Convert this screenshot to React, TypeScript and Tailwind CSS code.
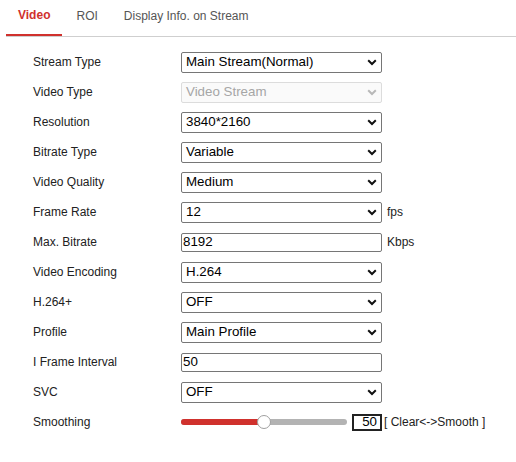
import React from 'react'

type Row = {
  label: string
  kind: 'select' | 'input' | 'slider'
  value?: string
  disabled?: boolean
  unit?: string
}

const rows: Row[] = [
  { label: 'Stream Type', kind: 'select', value: 'Main Stream(Normal)' },
  { label: 'Video Type', kind: 'select', value: 'Video Stream', disabled: true },
  { label: 'Resolution', kind: 'select', value: '3840*2160' },
  { label: 'Bitrate Type', kind: 'select', value: 'Variable' },
  { label: 'Video Quality', kind: 'select', value: 'Medium' },
  { label: 'Frame Rate', kind: 'select', value: '12', unit: 'fps' },
  { label: 'Max. Bitrate', kind: 'input', value: '8192', unit: 'Kbps' },
  { label: 'Video Encoding', kind: 'select', value: 'H.264' },
  { label: 'H.264+', kind: 'select', value: 'OFF' },
  { label: 'Profile', kind: 'select', value: 'Main Profile' },
  { label: 'I Frame Interval', kind: 'input', value: '50' },
  { label: 'SVC', kind: 'select', value: 'OFF' },
  { label: 'Smoothing', kind: 'slider', value: '50' }
]

function Chevron({ disabled }: { disabled?: boolean }) {
  return (
    <svg width="10" height="7" viewBox="0 0 10 7" className="shrink-0">
      <path
        d="M1.2 1.3 L5 5 L8.8 1.3"
        fill="none"
        stroke={disabled ? '#b8b8b8' : '#111'}
        strokeWidth="2"
      />
    </svg>
  )
}

function FakeSelect({ value, disabled }: { value: string; disabled?: boolean }) {
  return (
    <div
      className={
        disabled
          ? 'flex h-[21px] w-[201px] items-center justify-between rounded-[2px] border border-[#dcdcdc] bg-[#fafafa] pl-[4px] pr-[4px] text-[13.33px] text-[#a6a6a6]'
          : 'flex h-[21px] w-[201px] items-center justify-between rounded-[2px] border border-[#767676] bg-white pl-[4px] pr-[4px] text-[13.33px] text-black'
      }
    >
      <span>{value}</span>
      <Chevron disabled={disabled} />
    </div>
  )
}

function Smoothing({ value }: { value: string }) {
  const pct = Number(value)
  return (
    <div className="flex items-center">
      <div className="relative h-[14px] w-[166px]">
        <div className="absolute left-0 right-0 top-[4px] h-[6px] rounded-full bg-[#b3b3b3]" />
        <div
          className="absolute left-0 top-[4px] h-[6px] rounded-full bg-[#d0312d]"
          style={{ width: `${pct}%` }}
        />
        <div
          className="absolute top-0 h-[14px] w-[14px] -translate-x-1/2 rounded-full border border-[#a0a0a0] bg-white"
          style={{ left: `${pct}%` }}
        />
      </div>
      <div className="ml-[5px] flex h-[17px] w-[30px] items-center justify-end border-2 border-[#222] pr-[3px] text-[13.33px] text-black">
        {value}
      </div>
      <span className="ml-[2px] text-[12px] text-[#222]">[ Clear&lt;-&gt;Smooth ]</span>
    </div>
  )
}

export default function App() {
  return (
    <div
      className="h-[462px] w-[516px] bg-white pl-[6px]"
      style={{ fontFamily: '"Liberation Sans", Arial, sans-serif' }}
    >
      <div className="flex h-[37px] gap-[2px] border-b border-[#cfcfcf]">
        <div className="flex h-[36px] items-center border-b-2 border-[#d0312d] px-[12px] pb-[4px] text-[12px] font-bold text-[#d0312d]">
          Video
        </div>
        <div className="flex h-[36px] items-center px-[12px] pb-[4px] text-[12px] text-[#555]">
          ROI
        </div>
        <div className="flex h-[36px] items-center px-[12px] pb-[4px] text-[12px] text-[#555]">
          Display Info. on Stream
        </div>
      </div>

      <div className="pl-[27px] pt-[10px]">
        {rows.map(row => (
          <div key={row.label} className="flex h-[30px] items-center">
            <div className="w-[148px] text-[12px] text-[#222]">{row.label}</div>
            {row.kind === 'select' && (
              <FakeSelect value={row.value ?? ''} disabled={row.disabled} />
            )}
            {row.kind === 'input' && (
              <div className="flex h-[19px] w-[201px] items-center rounded-[2px] border border-[#767676] bg-white pl-[1px] text-[13.33px] text-black">
                {row.value}
              </div>
            )}
            {row.kind === 'slider' && <Smoothing value={row.value ?? '50'} />}
            {row.unit && (
              <span className="ml-[5px] text-[12px] text-[#222]">{row.unit}</span>
            )}
          </div>
        ))}
      </div>
    </div>
  )
}
